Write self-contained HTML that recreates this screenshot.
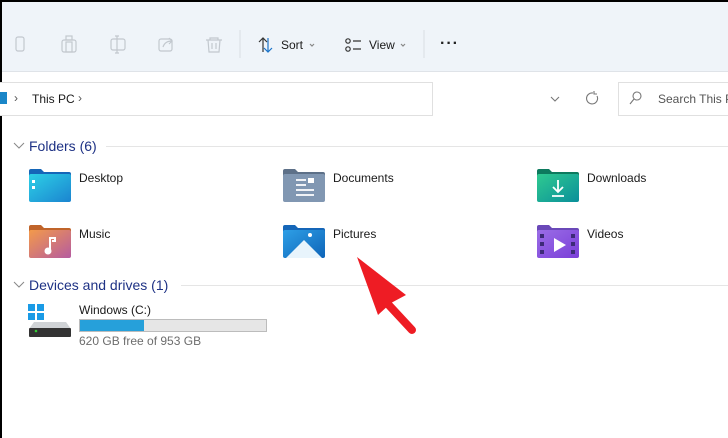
<!DOCTYPE html><html><head><style>
body{margin:0;width:728px;height:438px;overflow:hidden;background:#fff;font-family:"Liberation Sans",sans-serif;position:relative}
.a{position:absolute;white-space:nowrap}
.t{font-size:12px;color:#1a1a1a}
.h{font-size:14px;color:#1e3285}
</style></head><body>
<div class="a" style="left:0;top:0;width:728px;height:2px;background:#000"></div>
<div class="a" style="left:0;top:0;width:2px;height:438px;background:#000"></div>
<div class="a" style="left:2px;top:2px;width:726px;height:69px;background:#eff4f9;border-bottom:1px solid #dfe3e8"></div>
<svg class="a" style="left:0;top:30px" width="450" height="32" fill="none" stroke="#c2c8ce" stroke-width="1.2">
<rect x="16" y="7" width="8" height="14" rx="2"/>
<rect x="62" y="10" width="14" height="12" rx="2"/><rect x="66" y="6" width="6" height="4"/><rect x="66" y="12" width="6" height="10"/>
<rect x="111" y="9" width="14" height="11" rx="2"/><path d="M117 6v17M115 6h4M115 23h4"/>
<rect x="159" y="9" width="13" height="12" rx="2"/><path d="M163 17q2-6 9-6M169 8l3 3-3 3"/>
<path d="M206 10h16M210 10v-2h8v2M208 10l1 12h10l1-12M212 13v6M216 13v6"/>
<line x1="240" y1="0" x2="240" y2="28" stroke="#dde2e7"/>
<line x1="424" y1="0" x2="424" y2="28" stroke="#dde2e7"/>
<path d="M263 22V8M259 12l4-4 4 4" stroke="#333"/><path d="M268 8v14M264 18l4 4 4-4" stroke="#1a73c9"/>
<path d="M310 14l2 2 2-2M401 14l2 2 2-2" stroke="#888"/>
<circle cx="348" cy="11" r="2.2" stroke="#333"/><circle cx="348" cy="19" r="2.2" stroke="#333"/><path d="M353 11h8M353 19h8" stroke="#333"/>
</svg>
<div class="a t" style="left:281px;top:38px">Sort</div>
<div class="a t" style="left:369px;top:38px">View</div>
<div class="a" style="left:440px;top:35px;font-size:16px;font-weight:bold;color:#222;letter-spacing:1px">···</div>
<div class="a" style="left:0;top:82px;width:432px;height:32px;border:1px solid #e0e0e0;border-left:none;background:#fff"></div>
<div class="a" style="left:0;top:92px;width:7px;height:12px;background:#1a86c8"></div>
<div class="a t" style="left:14px;top:91px;color:#555">›</div>
<div class="a t" style="left:32px;top:92px">This PC</div>
<div class="a t" style="left:78px;top:91px;color:#555">›</div>
<svg class="a" style="left:545px;top:88px" width="60" height="20" fill="none" stroke="#777" stroke-width="1.1"><path d="M6 9l4 4 4-4"/><path d="M48 5a5.5 5.5 0 1 0 4 3M49 3v3h3"/></svg>
<div class="a" style="left:618px;top:82px;width:112px;height:32px;border:1px solid #e0e0e0;background:#fff;overflow:hidden"></div>
<svg class="a" style="left:628px;top:90px" width="16" height="16" fill="none" stroke="#777" stroke-width="1.1"><circle cx="9" cy="6" r="4"/><path d="M6 9l-4 5"/></svg>
<div class="a t" style="left:658px;top:92px;color:#555">Search This PC</div>
<svg class="a" style="left:12px;top:140px" width="14" height="10" fill="none" stroke="#888"><path d="M2 3l5 5 5-5"/></svg>
<div class="a h" style="left:29px;top:138px">Folders (6)</div>
<div class="a" style="left:106px;top:146px;width:622px;height:1px;background:#e5e5e5"></div>
<svg class="a" style="left:12px;top:279px" width="14" height="10" fill="none" stroke="#888"><path d="M2 3l5 5 5-5"/></svg>
<div class="a h" style="left:29px;top:277px">Devices and drives (1)</div>
<div class="a" style="left:181px;top:285px;width:547px;height:1px;background:#e5e5e5"></div>
<svg class="a" style="left:0;top:0" width="728" height="438">
<defs>
<linearGradient id="g1" x1="0" y1="0" x2="1" y2="1"><stop offset="0" stop-color="#2dd0e6"/><stop offset="1" stop-color="#1b84d0"/></linearGradient>
<linearGradient id="g2" x1="0" y1="0" x2="1" y2="1"><stop offset="0" stop-color="#f39a4a"/><stop offset="1" stop-color="#b55ba0"/></linearGradient>
<linearGradient id="g3" x1="0" y1="0" x2="1" y2="1"><stop offset="0" stop-color="#2e9fe6"/><stop offset="1" stop-color="#0e64b8"/></linearGradient>
<linearGradient id="g4" x1="0" y1="0" x2="1" y2="1"><stop offset="0" stop-color="#2fca90"/><stop offset="1" stop-color="#0a8f9a"/></linearGradient>
<linearGradient id="g5" x1="0" y1="0" x2="1" y2="1"><stop offset="0" stop-color="#9a6de6"/><stop offset="1" stop-color="#7a3ed8"/></linearGradient>
</defs>
<path d="M29 171q0-2 2-2h10l3 3h25q2 0 2 2v4H29z" fill="#1566b8"/><rect x="29" y="174" width="42" height="28" rx="2" fill="url(#g1)"/><rect x="32" y="180" width="3" height="3" fill="#fff"/><rect x="32" y="186" width="3" height="3" fill="#fff"/>
<path d="M29 227q0-2 2-2h10l3 3h25q2 0 2 2v4H29z" fill="#c0642a"/><rect x="29" y="230" width="42" height="28" rx="2" fill="url(#g2)"/><circle cx="48" cy="251" r="3.5" fill="#fff"/><path d="M50 251v-13h5v3h-3" stroke="#fff" stroke-width="2" fill="none"/>
<path d="M283 171q0-2 2-2h10l3 3h25q2 0 2 2v4H283z" fill="#5d7088"/><rect x="283" y="174" width="42" height="28" rx="2" fill="#8197b2"/><path d="M296 180h10M296 185h10M296 190h18M296 195h18" stroke="#fff" stroke-width="1.8"/><rect x="308" y="178" width="6" height="5" fill="#fff"/>
<path d="M283 227q0-2 2-2h10l3 3h25q2 0 2 2v4H283z" fill="#1566b8"/><rect x="283" y="230" width="42" height="28" rx="2" fill="url(#g3)"/><path d="M286 258l18-18 18 18z" fill="#e8f4fc"/><circle cx="310" cy="235" r="2" fill="#fff"/>
<path d="M537 171q0-2 2-2h10l3 3h25q2 0 2 2v4H537z" fill="#0d7a5e"/><rect x="537" y="174" width="42" height="28" rx="2" fill="url(#g4)"/><path d="M558 180v12M553 187l5 5 5-5M552 196h12" stroke="#fff" stroke-width="1.8" fill="none"/>
<path d="M537 227q0-2 2-2h10l3 3h25q2 0 2 2v4H537z" fill="#6a48b8"/><rect x="537" y="230" width="42" height="28" rx="2" fill="url(#g5)"/><path d="M554 238v14l12-7z" fill="#fff"/><g fill="#3d2a78"><rect x="540" y="234" width="4" height="4"/><rect x="540" y="242" width="4" height="4"/><rect x="540" y="250" width="4" height="4"/><rect x="571" y="234" width="4" height="4"/><rect x="571" y="242" width="4" height="4"/><rect x="571" y="250" width="4" height="4"/></g>
<g fill="#1a9be6"><rect x="28" y="304" width="7" height="7"/><rect x="37" y="304" width="7" height="7"/><rect x="28" y="313" width="7" height="7"/><rect x="37" y="313" width="7" height="7"/></g>
<path d="M34 322h32l5 7H29z" fill="#d0d3d6"/><rect x="29" y="328" width="42" height="9" rx="1" fill="#333"/><circle cx="36" cy="331" r="1.3" fill="#3c3"/>
<rect x="79.5" y="319.5" width="187" height="12" fill="#e6e6e6" stroke="#bcbcbc"/><rect x="80" y="320" width="64" height="11" fill="#26a0da"/>
<path d="M357 257L406 295L391 303L378 315z" fill="#ee1c24"/>
<path d="M386 302L412 330" stroke="#ee1c24" stroke-width="8" stroke-linecap="round"/>
</svg>
<div class="a t" style="left:79px;top:171px">Desktop</div>
<div class="a t" style="left:79px;top:227px">Music</div>
<div class="a t" style="left:333px;top:171px">Documents</div>
<div class="a t" style="left:333px;top:227px">Pictures</div>
<div class="a t" style="left:587px;top:171px">Downloads</div>
<div class="a t" style="left:587px;top:227px">Videos</div>
<div class="a t" style="left:79px;top:303px">Windows (C:)</div>
<div class="a t" style="left:79px;top:334px;color:#6d6d6d">620 GB free of 953 GB</div>
</body></html>
